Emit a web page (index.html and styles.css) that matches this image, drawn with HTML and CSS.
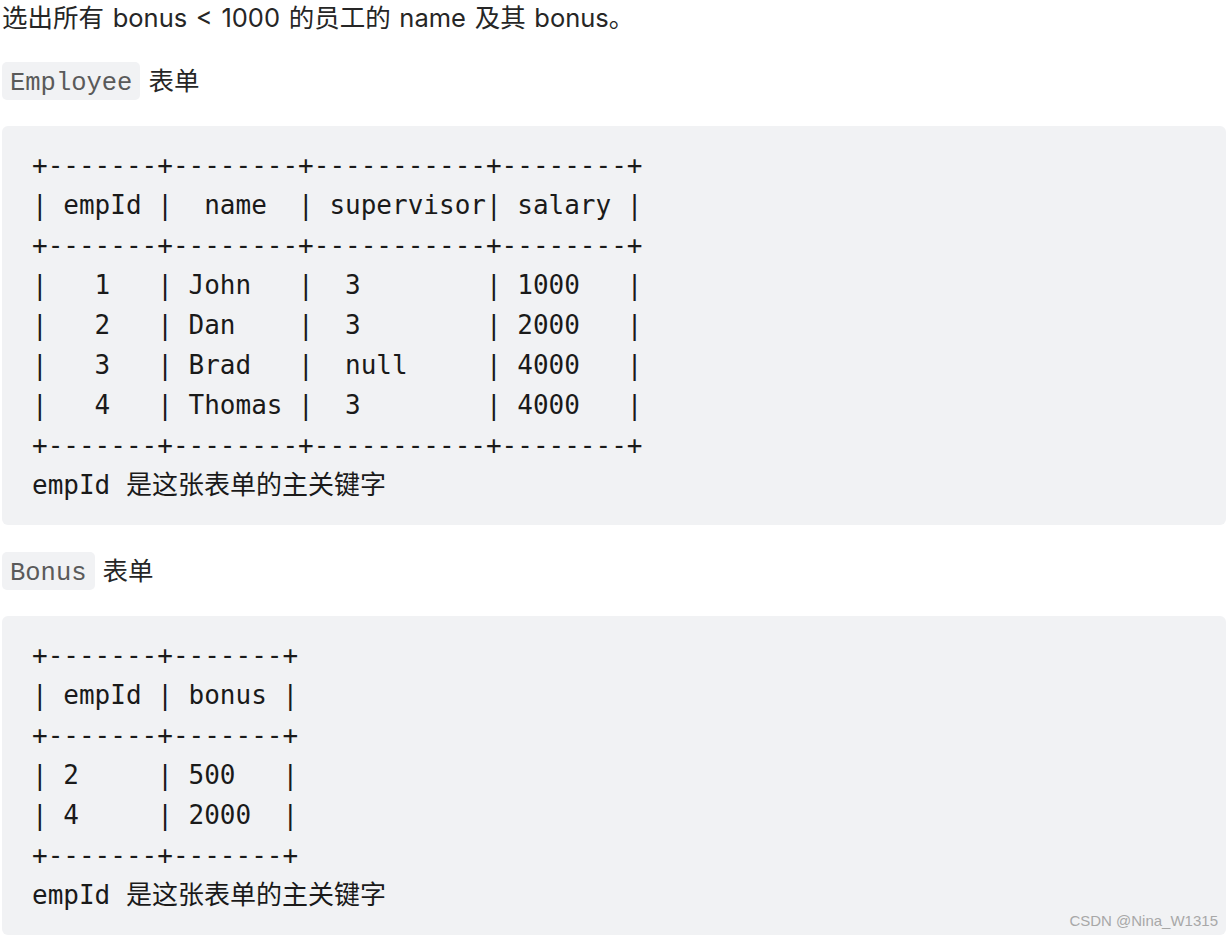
FILE: index.html
```html
<!DOCTYPE html>
<html lang="zh">
<head>
<meta charset="utf-8">
<link rel="stylesheet" href="styles.css">
</head>
<body>
<div class="page">
<p class="para">选出所有 bonus &lt; 1000 的员工的 name 及其 bonus。</p>
<p class="label label-first"><code class="inline">Employee</code><span>表单</span></p>
<pre class="block">+-------+--------+-----------+--------+
| empId |  name  | supervisor| salary |
+-------+--------+-----------+--------+
|   1   | John   |  3        | 1000   |
|   2   | Dan    |  3        | 2000   |
|   3   | Brad   |  null     | 4000   |
|   4   | Thomas |  3        | 4000   |
+-------+--------+-----------+--------+
empId 是这张表单的主关键字</pre>
<p class="label"><code class="inline">Bonus</code><span>表单</span></p>
<div class="block-wrap">
<pre class="block">+-------+-------+
| empId | bonus |
+-------+-------+
| 2     | 500   |
| 4     | 2000  |
+-------+-------+
empId 是这张表单的主关键字</pre>
<span class="watermark">CSDN @Nina_W1315</span>
</div>
</div>
</body>
</html>
```
FILE: styles.css
```css
html, body {
  margin: 0;
  padding: 0;
  background: #ffffff;
}
.page {
  padding: 0 6px 0 2px;
  font-family: "Inter", "Noto Sans CJK SC", sans-serif;
  font-size: 25.5px;
  color: #262626;
}
.para {
  margin: 0;
  line-height: 36px;
  word-spacing: 1.5px;
}
.label {
  margin: 27px 0 0;
  height: 38px;
  display: flex;
  align-items: center;
  gap: 8px;
  line-height: 38px;
}
.label-first {
  margin-top: 26px;
}
.inline {
  font-family: "Liberation Mono", "Noto Sans CJK SC", monospace;
  font-size: 25.5px;
  color: #5a5a5a;
  background: #f1f2f4;
  border-radius: 5px;
  padding: 3px 8px 0;
  height: 35px;
  line-height: 38px;
}
.block {
  margin: 26px 0 0;
  padding: 19px 30px 20px;
  background: #f1f2f4;
  border-radius: 6px;
  font-family: "DejaVu Sans Mono", "Noto Sans CJK SC", monospace;
  font-size: 26px;
  line-height: 40px;
  color: #1a1a1a;
  white-space: pre;
}
.block-wrap {
  position: relative;
  margin-top: 26px;
}
.block-wrap .block {
  margin-top: 0;
}
.watermark {
  position: absolute;
  right: 8px;
  bottom: 6px;
  font-family: "Liberation Sans", sans-serif;
  font-size: 15px;
  color: #a8a8a8;
}
```
